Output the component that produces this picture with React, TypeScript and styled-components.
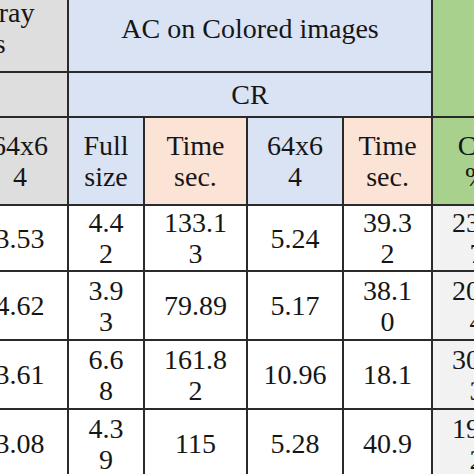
import React from 'react';
import styled, { createGlobalStyle } from 'styled-components';

const GlobalStyle = createGlobalStyle`
  html, body {
    margin: 0;
    padding: 0;
    background: #ffffff;
  }
`;

type Tone = 'gray' | 'blue' | 'salmon' | 'green' | 'plain' | 'pale';

const TONES: Record<Tone, string> = {
  gray: '#dedede',
  blue: '#dae3f3',
  salmon: '#fbe3d6',
  green: '#a9d18e',
  plain: '#ffffff',
  pale: '#f2f2f2',
};

const COLS = [108, 96, 76, 103, 96, 89, 89];
const TABLE_WIDTH = COLS.reduce((a, b) => a + b, 0);

// the screenshot is a crop of a wider table, so the table hangs out of a clipped frame
const Viewport = styled.div`
  width: 474px;
  height: 474px;
  overflow: hidden;
  background: #ffffff;
`;

const Table = styled.table`
  table-layout: fixed;
  border-collapse: collapse;
  width: ${TABLE_WIDTH}px;
  min-width: ${TABLE_WIDTH}px;
  margin-left: -137px;
  margin-top: -17px;
  font-family: 'Liberation Serif', 'DejaVu Serif', serif;
  font-size: 28px;
  line-height: 31px;
  color: #161616;
`;

const Row = styled.tr<{ $h: number }>`
  height: ${(p) => p.$h}px;
`;

const Cell = styled.td<{ $tone?: Tone }>`
  border: 2px solid #2a2a2a;
  padding: 0 14px;
  text-align: center;
  vertical-align: middle;
  overflow-wrap: anywhere;
  background: ${(p) => TONES[p.$tone ?? 'plain']};
`;

const DATA = [
  ['5.12', '3.53', '4.42', '133.13', '5.24', '39.32', '23.57'],
  ['4.98', '4.62', '3.93', '79.89', '5.17', '38.10', '20.54'],
  ['6.02', '3.61', '6.68', '161.82', '10.96', '18.1', '30.33'],
  ['4.21', '3.08', '4.39', '115', '5.28', '40.9', '19.32'],
];

const ROW_HEIGHTS = [66, 69, 69, 69];

export default function App() {
  return (
    <>
      <GlobalStyle />
      <Viewport>
        <Table>
          <colgroup>
            {COLS.map((w, i) => (
              <col key={i} style={{ width: w }} />
            ))}
          </colgroup>
          <tbody>
            <Row $h={88}>
              <Cell $tone="gray" colSpan={2}>AC on Gray images</Cell>
              <Cell $tone="blue" colSpan={4}>AC on Colored images</Cell>
              <Cell $tone="green" rowSpan={2} />
            </Row>
            <Row $h={45}>
              <Cell $tone="gray" colSpan={2}>CR</Cell>
              <Cell $tone="blue" colSpan={4}>CR</Cell>
            </Row>
            <Row $h={88}>
              <Cell $tone="gray">Full size</Cell>
              <Cell $tone="gray">64x64</Cell>
              <Cell $tone="blue">Full size</Cell>
              <Cell $tone="salmon">Time sec.</Cell>
              <Cell $tone="blue">64x64</Cell>
              <Cell $tone="salmon">Time sec.</Cell>
              <Cell $tone="green">CR %</Cell>
            </Row>
            {DATA.map((row, r) => (
              <Row key={r} $h={ROW_HEIGHTS[r]}>
                {row.map((v, c) => (
                  <Cell key={c} $tone={c === row.length - 1 ? 'pale' : 'plain'}>
                    {v}
                  </Cell>
                ))}
              </Row>
            ))}
          </tbody>
        </Table>
      </Viewport>
    </>
  );
}
